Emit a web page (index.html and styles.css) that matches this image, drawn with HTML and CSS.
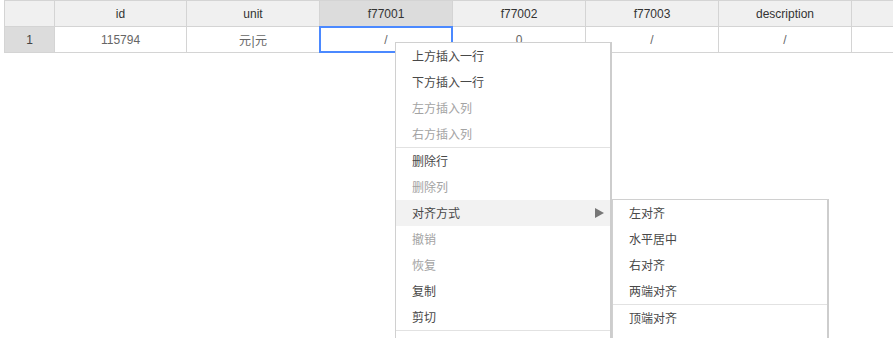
FILE: index.html
```html
<!DOCTYPE html>
<html lang="zh-CN">
<head>
    <meta charset="UTF-8">
    <meta name="viewport" content="width=device-width, initial-scale=1.0">
    <title>Sheet</title>
    <link rel="stylesheet" href="styles.css">
</head>
<body>
<div class="page">
    <div class="sheet">
        <div class="cell corner"></div>
        <div class="cell head">id</div>
        <div class="cell head">unit</div>
        <div class="cell head active">f77001</div>
        <div class="cell head">f77002</div>
        <div class="cell head">f77003</div>
        <div class="cell head">description</div>
        <div class="cell head"></div>

        <div class="cell rowhead">1</div>
        <div class="cell">115794</div>
        <div class="cell">元|元</div>
        <div class="cell selected">/</div>
        <div class="cell">0</div>
        <div class="cell">/</div>
        <div class="cell">/</div>
        <div class="cell"></div>
    </div>

    <ul class="menu main-menu">
        <li>上方插入一行</li>
        <li>下方插入一行</li>
        <li class="disabled">左方插入列</li>
        <li class="disabled sep">右方插入列</li>
        <li>删除行</li>
        <li class="disabled">删除列</li>
        <li class="hover has-sub">对齐方式
            <svg class="arrow" width="10" height="10" viewBox="0 0 10 10"><path d="M1 0 L10 5 L1 10 Z" fill="#777"/></svg>
        </li>
        <li class="disabled">撤销</li>
        <li class="disabled">恢复</li>
        <li>复制</li>
        <li class="sep">剪切</li>
    </ul>

    <ul class="menu sub-menu">
        <li>左对齐</li>
        <li>水平居中</li>
        <li>右对齐</li>
        <li class="sep">两端对齐</li>
        <li>顶端对齐</li>
    </ul>
</div>
</body>
</html>
```

FILE: styles.css
```css
html, body {
    margin: 0;
    padding: 0;
    background: #fff;
    overflow: hidden;
}

.page {
    position: relative;
    height: 100vh;
    overflow: hidden;
    padding-left: 4px;
    font-family: "Liberation Sans", Arial, sans-serif;
    font-size: 12px;
}

.sheet {
    display: grid;
    grid-template-columns: 51px 132px 133px 133px 133px 133px 133px 60px;
    grid-template-rows: 27px 26px;
}

.cell {
    box-sizing: border-box;
    border-right: 1px solid #d4d4d4;
    border-bottom: 1px solid #d4d4d4;
    display: flex;
    align-items: center;
    justify-content: center;
    color: #666;
    background: #fff;
    position: relative;
}

.cell:first-child,
.cell.rowhead {
    border-left: 1px solid #d4d4d4;
}

.cell.corner,
.cell.head {
    background: #f0f0f0;
    color: #333;
    border-top: 1px solid #d4d4d4;
}

.cell.head.active,
.cell.rowhead {
    background: #dcdcdc;
}

.cell.rowhead {
    color: #444;
}

.cell.selected::after {
    content: "";
    position: absolute;
    left: -1px;
    top: -1px;
    right: -1px;
    bottom: -1px;
    border: 2px solid #4b89ff;
}

.menu {
    position: absolute;
    margin: 0;
    padding: 0 0 40px;
    list-style: none;
    box-sizing: border-box;
    width: 217px;
    background: #fff;
    border: 1px solid #d0d0d0;
    border-right: 2px solid #cdcdcd;
    font-family: "Noto Sans CJK SC", "Liberation Sans", sans-serif;
    font-size: 12px;
    color: #484848;
}

.main-menu {
    left: 395px;
    top: 42px;
}

.sub-menu {
    left: 612px;
    top: 199px;
}

.menu li {
    position: relative;
    height: 26px;
    line-height: 26px;
    padding-left: 16px;
}

.menu li.sep {
    border-bottom: 1px solid #e2e2e2;
}

.menu li.disabled {
    color: #a3a3a3;
}

.menu li.hover {
    background: #f2f2f2;
}

.menu .arrow {
    position: absolute;
    right: 6px;
    top: 8px;
}
```
